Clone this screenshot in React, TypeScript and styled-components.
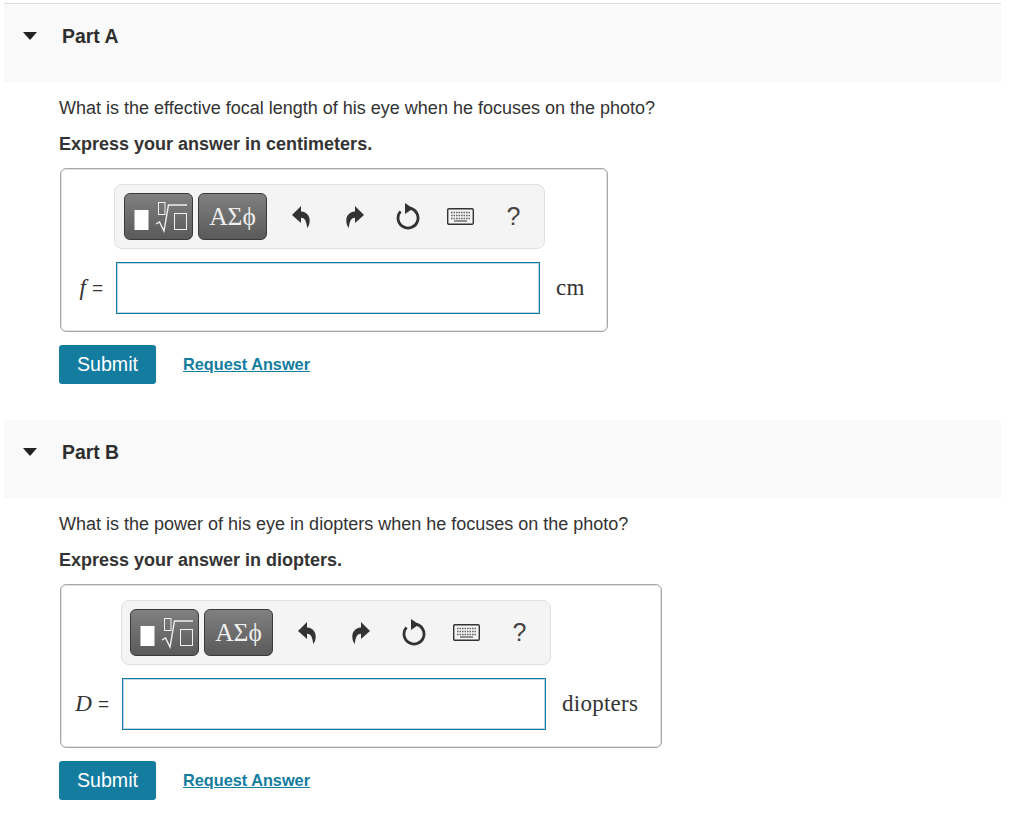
import React, { FC } from 'react';
import styled, { createGlobalStyle } from 'styled-components';

const GlobalStyle = createGlobalStyle`
  html, body {
    margin: 0;
    padding: 0;
    background: #fff;
    font-family: 'Liberation Sans', Arial, sans-serif;
    color: #333;
  }
`;

const Page = styled.div`
  width: 1024px;
  height: 827px;
  padding: 3px 23px 0 4px;
  box-sizing: border-box;
  overflow: hidden;
`;

const Section = styled.section<{ $gap?: number }>`
  margin-bottom: ${(p) => p.$gap ?? 0}px;
`;

const PartHeader = styled.div<{ $ruled?: boolean }>`
  display: flex;
  align-items: flex-start;
  height: ${(p) => (p.$ruled ? 79 : 78)}px;
  padding-top: 21px;
  box-sizing: border-box;
  background: #f9f9f9;
  border-top: ${(p) => (p.$ruled ? '1px solid #dedede' : 'none')};
`;

const Caret = styled.span`
  width: 0;
  height: 0;
  margin: 7px 0 0 19px;
  border-left: 7.5px solid transparent;
  border-right: 7.5px solid transparent;
  border-top: 8px solid #222;
`;

const PartTitle = styled.h2`
  margin: 0 0 0 25px;
  font-size: 19.4px;
  line-height: 22px;
  font-weight: 700;
  color: #2d2d2d;
`;

const Body = styled.div`
  padding: 14px 0 0 55px;
`;

const Question = styled.p`
  margin: 0;
  font-size: 18px;
  line-height: 24px;
  color: #333;
`;

const Instruction = styled.p`
  margin: 12px 0 0;
  font-size: 18px;
  line-height: 24px;
  font-weight: 700;
  color: #333;
`;

const AnswerBox = styled.div<{ $width: number }>`
  width: ${(p) => p.$width}px;
  height: 164px;
  margin: 12px 0 0 1px;
  padding: 15px 0 0;
  box-sizing: border-box;
  border: 1px solid #a8a8a8;
  border-radius: 6px;
  box-shadow: inset 0 0 0 1px rgba(170, 170, 170, 0.35);
  background: #fff;
`;

const Toolbar = styled.div<{ $indent: number; $width: number; $pad: number }>`
  display: flex;
  align-items: center;
  width: ${(p) => p.$width}px;
  height: 65px;
  margin-left: ${(p) => p.$indent}px;
  box-sizing: border-box;
  padding: 0 0 0 ${(p) => p.$pad}px;
  background: #f4f4f4;
  border: 1px solid #e0e0e0;
  border-radius: 8px;
`;

const MathButton = styled.div`
  display: flex;
  flex-shrink: 0;
  align-items: center;
  justify-content: center;
  width: 69px;
  height: 47px;
  margin-right: 5px;
  box-sizing: border-box;
  border: 1px solid #3a3a3a;
  border-radius: 6px;
  background: linear-gradient(#808080, #5a5a5a);
  color: #eee;
  font-family: 'Liberation Serif', 'Times New Roman', serif;
  font-size: 25.5px;
`;

const ToolIcons = styled.div`
  display: flex;
  align-items: center;
  padding-left: 3px;
  color: #333;
`;

const IconSlot = styled.span`
  display: flex;
  flex-shrink: 0;
  justify-content: center;
  align-items: center;
  width: 53px;
`;

const Help = styled.span`
  font-size: 25px;
  color: #444;
`;

const InputRow = styled.div`
  display: flex;
  align-items: center;
  margin-top: 13px;
`;

const VarLabel = styled.span<{ $width: number }>`
  display: flex;
  justify-content: flex-end;
  align-items: center;
  gap: 6px;
  width: ${(p) => p.$width}px;
  padding-right: 13px;
  box-sizing: border-box;
  font-size: 19px;
  color: #333;

  i {
    font-family: 'Liberation Serif', 'Times New Roman', serif;
    font-size: 23px;
  }
`;

const AnswerInput = styled.input<{ $width: number }>`
  width: ${(p) => p.$width}px;
  height: 52px;
  box-sizing: border-box;
  border: 1px solid #137c9f;
  box-shadow: inset 0 0 0 1px rgba(19, 124, 159, 0.3);
  background: #fff;
  outline: none;
`;

const Unit = styled.span`
  margin-left: 16px;
  font-family: 'Liberation Serif', 'Times New Roman', serif;
  font-size: 23px;
  letter-spacing: 0.25px;
  color: #333;
`;

const Actions = styled.div`
  display: flex;
  align-items: center;
  margin-top: 13px;
`;

const SubmitButton = styled.button`
  width: 97px;
  height: 39px;
  padding: 0;
  border: none;
  border-radius: 3px;
  background: #137c9f;
  color: #fff;
  font-family: inherit;
  font-size: 19.6px;
`;

const RequestLink = styled.a`
  margin: 0 0 1px 27px;
  color: #137c9f;
  font-size: 16.3px;
  font-weight: 700;
  text-decoration: underline;
`;

const TemplateIcon: FC = () => (
  <svg width="60" height="34" viewBox="0 0 60 34" fill="none">
    <rect x="5.5" y="10" width="14" height="20" fill="#fff" />
    <rect x="29.5" y="2.5" width="6.5" height="12" stroke="#f0f0f0" />
    <path d="M27 24l3.5-2L35 31 39.5 5H58" stroke="#f0f0f0" strokeWidth="1.4" />
    <rect x="45.5" y="13.5" width="12" height="16" stroke="#f0f0f0" />
  </svg>
);

const ArrowIcon: FC<{ flip?: boolean }> = ({ flip }) => (
  <svg
    width="19"
    height="22"
    viewBox="0 0 19 22"
    style={flip ? { transform: 'scaleX(-1)' } : undefined}
  >
    <path
      d="M9 0L0 9l9 8v-5.2c3.6 0 5.4 2.6 6.2 10.2 3.6-3.6 4.6-15.6-6.2-16.4z"
      fill="#333"
    />
  </svg>
);

const ResetIcon: FC = () => (
  <svg width="24" height="30" viewBox="0 0 24 30" fill="none">
    <path d="M14 6.2A10 10 0 1 1 4.5 9.4" stroke="#333" strokeWidth="2.8" />
    <path d="M9 1l8 5.5-8 5.5z" fill="#333" />
  </svg>
);

const KeyboardIcon: FC = () => (
  <svg width="27" height="17" viewBox="0 0 27 17" fill="none">
    <rect x="0.7" y="0.7" width="25.6" height="15.6" rx="1.2" stroke="#333" strokeWidth="1.4" />
    <path
      d="M4 4.5h19M4 7.5h19M4 10.5h19"
      stroke="#666"
      strokeWidth="1.6"
      strokeDasharray="1.6 0.9"
    />
    <path d="M7 13h13" stroke="#666" strokeWidth="1.4" />
  </svg>
);

interface PartProps {
  title: string;
  question: string;
  instruction: string;
  variable: string;
  unit: string;
  boxWidth: number;
  labelWidth: number;
  toolbarIndent: number;
  toolbarWidth: number;
  toolbarPad: number;
  inputWidth: number;
  ruled?: boolean;
  gap?: number;
}

const Part: FC<PartProps> = (props) => (
  <Section $gap={props.gap}>
    <PartHeader $ruled={props.ruled}>
      <Caret />
      <PartTitle>{props.title}</PartTitle>
    </PartHeader>
    <Body>
      <Question>{props.question}</Question>
      <Instruction>{props.instruction}</Instruction>
      <AnswerBox $width={props.boxWidth}>
        <Toolbar
          $indent={props.toolbarIndent}
          $width={props.toolbarWidth}
          $pad={props.toolbarPad}
        >
          <MathButton>
            <TemplateIcon />
          </MathButton>
          <MathButton>ΑΣϕ</MathButton>
          <ToolIcons>
            <IconSlot>
              <ArrowIcon />
            </IconSlot>
            <IconSlot>
              <ArrowIcon flip />
            </IconSlot>
            <IconSlot>
              <ResetIcon />
            </IconSlot>
            <IconSlot>
              <KeyboardIcon />
            </IconSlot>
            <IconSlot>
              <Help>?</Help>
            </IconSlot>
          </ToolIcons>
        </Toolbar>
        <InputRow>
          <VarLabel $width={props.labelWidth}>
            <i>{props.variable}</i>=
          </VarLabel>
          <AnswerInput $width={props.inputWidth} readOnly />
          <Unit>{props.unit}</Unit>
        </InputRow>
      </AnswerBox>
      <Actions>
        <SubmitButton>Submit</SubmitButton>
        <RequestLink href="#">Request Answer</RequestLink>
      </Actions>
    </Body>
  </Section>
);

const App: FC = () => (
  <>
    <GlobalStyle />
    <Page>
      <Part
        title="Part A"
        question="What is the effective focal length of his eye when he focuses on the photo?"
        instruction="Express your answer in centimeters."
        variable="f"
        unit="cm"
        boxWidth={548}
        labelWidth={55}
        toolbarIndent={53}
        toolbarWidth={431}
        toolbarPad={9}
        inputWidth={424}
        ruled
        gap={36}
      />
      <Part
        title="Part B"
        question="What is the power of his eye in diopters when he focuses on the photo?"
        instruction="Express your answer in diopters."
        variable="D"
        unit="diopters"
        boxWidth={602}
        labelWidth={61}
        toolbarIndent={60}
        toolbarWidth={430}
        toolbarPad={8}
        inputWidth={424}
      />
    </Page>
  </>
);

export default App;
